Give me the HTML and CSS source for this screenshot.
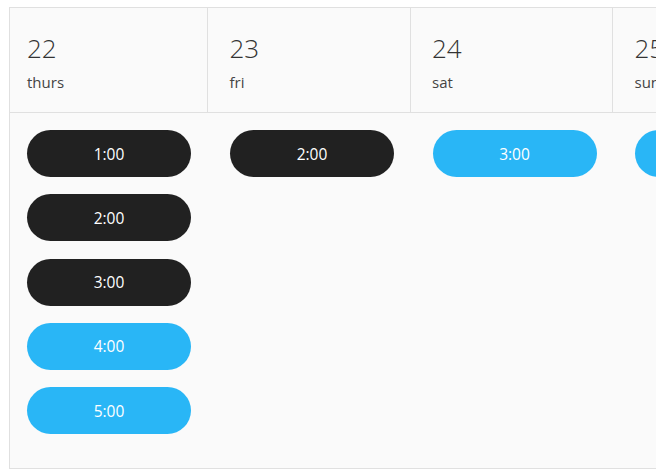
FILE: index.html
```html
<!DOCTYPE html>
<html>
<head>
<meta charset="utf-8">
<link rel="stylesheet" href="styles.css">
</head>
<body>
<div class="calendar">
  <div class="day day-first">
    <div class="day-head">
      <div class="day-num">22</div>
      <div class="day-name">thurs</div>
    </div>
    <div class="slots">
      <div class="slot slot-dark">1:00</div>
      <div class="slot slot-dark">2:00</div>
      <div class="slot slot-dark">3:00</div>
      <div class="slot slot-blue">4:00</div>
      <div class="slot slot-blue">5:00</div>
    </div>
  </div>
  <div class="day">
    <div class="day-head">
      <div class="day-num">23</div>
      <div class="day-name">fri</div>
    </div>
    <div class="slots">
      <div class="slot slot-dark">2:00</div>
    </div>
  </div>
  <div class="day">
    <div class="day-head">
      <div class="day-num">24</div>
      <div class="day-name">sat</div>
    </div>
    <div class="slots">
      <div class="slot slot-blue">3:00</div>
    </div>
  </div>
  <div class="day">
    <div class="day-head">
      <div class="day-num">25</div>
      <div class="day-name">sun</div>
    </div>
    <div class="slots">
      <div class="slot slot-blue">4:00</div>
    </div>
  </div>
</div>
</body>
</html>
```
FILE: styles.css
```css
html, body {
  margin: 0;
  padding: 0;
  background: #ffffff;
  overflow: hidden;
}
body {
  font-family: "Open Sans", "Noto Sans", sans-serif;
  color: #333333;
}
.calendar {
  margin: 7px 0 0 9px;
  display: flex;
  width: max-content;
  background: #fafafa;
  border-top: 1px solid #e0e0e0;
  border-left: 1px solid #e0e0e0;
  border-bottom: 1px solid #e0e0e0;
}
.day {
  width: 202.5px;
  display: flex;
  flex-direction: column;
}
.day-first {
  width: 198px;
}
.day-head {
  height: 105px;
  box-sizing: border-box;
  padding: 25px 0 0 21.5px;
  border-right: 1px solid #e0e0e0;
  border-bottom: 1px solid #e0e0e0;
}
.day-first .day-head,
.day-first .slots {
  padding-left: 17px;
}
.day-num {
  font-size: 26px;
  font-weight: 300;
  line-height: 30px;
  color: #333;
}
.day-name {
  font-size: 15px;
  font-weight: 400;
  line-height: 22px;
  margin-top: 8px;
  color: #444;
}
.slots {
  height: 355px;
  box-sizing: border-box;
  padding: 17px 0 0 22px;
  display: flex;
  flex-direction: column;
  gap: 17.25px;
}
.slot {
  width: 164px;
  height: 47px;
  border-radius: 24px;
  display: flex;
  align-items: center;
  justify-content: center;
  color: #ffffff;
  font-size: 15.5px;
}
.slot-dark {
  background: #212121;
}
.slot-blue {
  background: #29b6f6;
}
```
